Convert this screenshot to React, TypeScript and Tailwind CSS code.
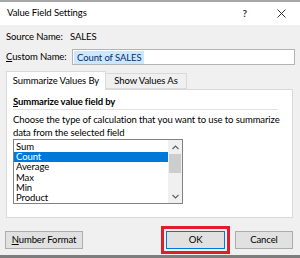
const items = ['Sum', 'Count', 'Average', 'Max', 'Min', 'Product'];

function Chevron({ down }: { down?: boolean }) {
  return (
    <svg width="7" height="5" viewBox="0 0 7 5" className="block">
      <polyline
        points={down ? '0.5,1 3.5,4 6.5,1' : '0.5,4 3.5,1 6.5,4'}
        fill="none"
        stroke="#606060"
        strokeWidth="1.1"
      />
    </svg>
  );
}

export default function App() {
  return (
    <div
      className="w-[300px] h-[258px] bg-[#f0f0f0] flex flex-col text-black text-[9.5px] tracking-[-0.1px] whitespace-nowrap overflow-hidden"
      style={{ fontFamily: 'Lato, "Noto Sans", sans-serif' }}
    >
      {/* window edge */}
      <div className="h-[2px] bg-[#a6a6a6]" />

      {/* title bar */}
      <div className="h-[23px] bg-white flex items-center pl-[7px] pr-[14px]">
        <span className="text-[9.5px]">Value Field Settings</span>
        <span className="ml-auto text-[10px] font-bold text-[#333]">?</span>
        <svg width="9" height="9" viewBox="0 0 9 9" className="ml-[30px]">
          <path d="M0.5 0.5 L8.5 8.5 M8.5 0.5 L0.5 8.5" stroke="#333" strokeWidth="1" />
        </svg>
      </div>

      <div className="flex-1 flex flex-col pl-[6px]">
        {/* source name */}
        <div className="flex items-center h-[14px] mt-[5px]">
          <span className="w-[64px]">Source Name:</span>
          <span>SALES</span>
        </div>

        {/* custom name */}
        <div className="flex items-center h-[16px] mt-[5px]">
          <span className="w-[66px]">
            <span className="underline">C</span>ustom Name:
          </span>
          <div className="w-[223px] h-[16px] bg-white border border-[#b4b4b4] flex items-center pl-[1px]">
            <span className="bg-[#cce8ff] text-[#0a2a6b] px-[3px] leading-[13px]">Count of SALES</span>
          </div>
        </div>

        {/* tabs */}
        <div className="flex items-end h-[19px] mt-[5px]">
          <div className="h-[19px] w-[100px] bg-white border border-b-0 border-[#d9d9d9] flex items-center justify-center -mb-px relative z-10">
            Summarize Values By
          </div>
          <div className="h-[16px] w-[81px] bg-[#f0f0f0] border border-l-0 border-[#d9d9d9] flex items-center justify-center">
            Show Values As
          </div>
        </div>

        {/* panel */}
        <div className="w-[287px] h-[129px] bg-white border border-[#d9d9d9] px-[6px] pt-[5px]">
          <div className="font-bold h-[13px] leading-[13px]">
            <span className="underline">S</span>ummarize value field by
          </div>
          <div className="h-px bg-[#e3e3e3] mt-[1px] mr-[8px]" />
          <div className="leading-[13px] mt-[3px]">
            Choose the type of calculation that you want to use to summarize
            <br />
            data from the selected field
          </div>
          <div className="w-[170px] h-[65px] border border-[#828282] flex">
            <div className="flex-1 pt-[2px]">
              {items.map((it) => (
                <div
                  key={it}
                  className={
                    it === 'Count'
                      ? 'h-[10.2px] leading-[10.2px] pl-[2px] bg-[#0078d7] text-white'
                      : 'h-[10.2px] leading-[10.2px] pl-[2px]'
                  }
                >
                  {it}
                </div>
              ))}
            </div>
            <div className="w-[14px] bg-[#f0f0f0] flex flex-col items-center">
              <div className="h-[14px] flex items-center justify-center">
                <Chevron />
              </div>
              <div className="w-[12px] h-[19px] bg-[#cdcdcd]" />
              <div className="mt-auto h-[14px] flex items-center justify-center">
                <Chevron down />
              </div>
            </div>
          </div>
        </div>

        {/* buttons */}
        <div className="flex items-center mt-[13px] pr-[7px]">
          <button className="w-[78px] h-[18px] bg-[#e1e1e1] border border-[#adadad] -ml-px">
            <span className="underline">N</span>umber Format
          </button>
          <button className="ml-auto w-[59px] h-[18px] bg-[#e1e1e1] border border-[#0078d7] outline-[3px] outline-solid outline-[#e01e2b] outline-offset-[2px]">
            OK
          </button>
          <button className="ml-[10px] w-[58px] h-[18px] bg-[#e1e1e1] border border-[#adadad]">
            Cancel
          </button>
        </div>
      </div>

      {/* bottom edge */}
      <div className="h-[3px] bg-[#7d7d7d]" />
    </div>
  );
}
